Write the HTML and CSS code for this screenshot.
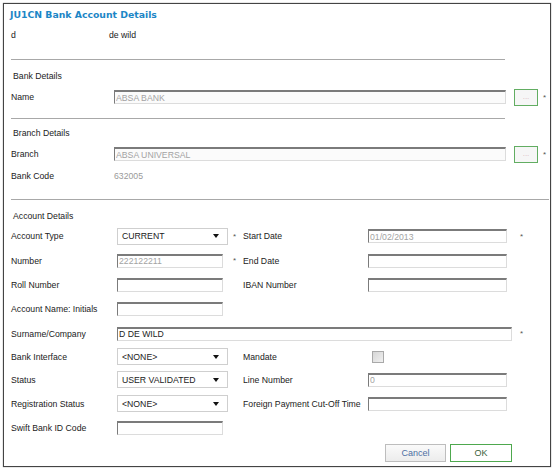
FILE: index.html
```html
<!DOCTYPE html>
<html lang="en">
<head>
    <meta charset="UTF-8">
    <title>JU1CN Bank Account Details</title>
    <link rel="stylesheet" href="styles.css">
</head>
<body>
    <div class="dialog">
        <h1 class="dialog-title">JU1CN Bank Account Details</h1>

        <div class="who">
            <span class="who-code">d</span>
            <span>de wild</span>
        </div>

        <hr class="rule rule-top">
        <div class="section-title">Bank Details</div>
        <div class="lookup-row">
            <label class="lbl">Name</label>
            <input class="field field-wide" type="text" value="ABSA BANK" disabled>
            <button class="pick">...</button>
            <span class="req">*</span>
        </div>

        <hr class="rule rule-mid">
        <div class="section-title">Branch Details</div>
        <div class="lookup-row">
            <label class="lbl">Branch</label>
            <input class="field field-wide" type="text" value="ABSA UNIVERSAL" disabled>
            <button class="pick">...</button>
            <span class="req">*</span>
        </div>
        <div class="info-row">
            <span class="lbl">Bank Code</span>
            <span class="muted">632005</span>
        </div>

        <hr class="rule rule-full">
        <div class="section-title">Account Details</div>

        <div class="account-grid">
            <label class="lbl">Account Type</label>
            <div class="select"><span>CURRENT</span><i class="caret"></i></div>
            <span class="req">*</span>
            <label class="lbl">Start Date</label>
            <input class="field" type="text" value="01/02/2013" disabled>
            <span class="req req-far">*</span>

            <label class="lbl">Number</label>
            <input class="field field-short" type="text" value="222122211" disabled>
            <span class="req">*</span>
            <label class="lbl">End Date</label>
            <input class="field" type="text">
            <span></span>

            <label class="lbl">Roll Number</label>
            <input class="field field-short" type="text">
            <span></span>
            <label class="lbl">IBAN Number</label>
            <input class="field" type="text">
            <span></span>

            <label class="lbl">Account Name: Initials</label>
            <input class="field field-short" type="text">
            <span></span><span></span><span></span><span></span>

            <label class="lbl">Surname/Company</label>
            <input class="field field-surname" type="text" value="D DE WILD">
            <span class="req req-far">*</span>

            <label class="lbl">Bank Interface</label>
            <div class="select"><span>&lt;NONE&gt;</span><i class="caret"></i></div>
            <span></span>
            <label class="lbl">Mandate</label>
            <div><span class="check"></span></div>
            <span></span>

            <label class="lbl">Status</label>
            <div class="select"><span>USER VALIDATED</span><i class="caret"></i></div>
            <span></span>
            <label class="lbl">Line Number</label>
            <input class="field" type="text" value="0" disabled>
            <span></span>

            <label class="lbl">Registration Status</label>
            <div class="select"><span>&lt;NONE&gt;</span><i class="caret"></i></div>
            <span></span>
            <label class="lbl">Foreign Payment Cut-Off Time</label>
            <input class="field" type="text">
            <span></span>

            <label class="lbl">Swift Bank ID Code</label>
            <input class="field field-short" type="text">
            <span></span><span></span><span></span><span></span>
        </div>

        <div class="actions">
            <button class="btn btn-cancel">Cancel</button>
            <button class="btn btn-ok">OK</button>
        </div>
    </div>
</body>
</html>
```

FILE: styles.css
```css
* {
    margin: 0;
    padding: 0;
    box-sizing: border-box;
}

body {
    padding: 3px;
    background: #fff;
    font-family: 'Liberation Sans', Arial, sans-serif;
    font-size: 8.7px;
    color: #222;
}

.dialog {
    width: 548px;
    height: 464px;
    border: 1px solid #444;
    box-shadow: 0 0 1px #777;
    padding-left: 7px;
}

.dialog-title {
    height: 22px;
    line-height: 22px;
    margin-left: -1px;
    font-family: 'DejaVu Sans', Verdana, sans-serif;
    font-size: 9.3px;
    font-weight: bold;
    color: #1c86c6;
}

.who {
    display: flex;
    height: 18px;
    align-items: center;
}

.who-code {
    width: 98px;
}

.rule {
    border: none;
    height: 1px;
    background: #a8a8a8;
}

.rule-top {
    width: 494px;
    margin-top: 15px;
}

.rule-mid {
    width: 494px;
    margin-top: 10px;
}

.rule-full {
    width: 538px;
    margin-top: 12px;
}

.section-title {
    height: 16px;
    line-height: 16px;
    margin-top: 8px;
    padding-left: 2px;
}

.rule-mid + .section-title {
    margin-top: 6px;
}

.lbl {
    color: #222;
}

.lookup-row {
    display: flex;
    align-items: center;
    height: 22px;
    margin-top: 2px;
}

.lookup-row .lbl,
.info-row .lbl {
    width: 103px;
}

.info-row {
    display: flex;
    align-items: center;
    height: 22px;
}

.muted {
    color: #9a9a9a;
}

.field {
    height: 14px;
    width: 139px;
    padding: 0 1px;
    font: inherit;
    color: #222;
    background: #fff;
    border: 1px solid #dcdcdc;
    border-top: 2px solid #7b7b7b;
    border-left-color: #7b7b7b;
    outline: none;
}

.field:disabled {
    color: #a3a3a3;
    background: #fff;
}

.field-wide,
.field-wide:disabled {
    width: 392px;
    background: #fbfbfb;
}

.field-short {
    width: 106px;
}

.field-surname {
    grid-column: 2 / 6;
    width: 395px;
}

.pick {
    width: 24px;
    height: 17px;
    margin-left: 8px;
    border: 1px solid #62ad62;
    background: #f6f6f6;
    color: #d8b8c0;
    font: inherit;
    font-size: 8px;
    line-height: 10px;
}

.req {
    padding-left: 5px;
    color: #555;
    font-size: 8px;
}

.req-far {
    padding-left: 13px;
}

.account-grid {
    display: grid;
    grid-template-columns: 106px 111px 15px 125px 139px 1fr;
    grid-template-rows: 24px 25px 24px 24px 25px 21px 25px 23px 25px;
    align-items: center;
}

.select {
    display: flex;
    align-items: center;
    justify-content: space-between;
    height: 17px;
    padding: 0 8px 0 4px;
    border: 1px solid #cfcfcf;
    background: #fff;
}

.caret {
    width: 0;
    height: 0;
    border-left: 3px solid transparent;
    border-right: 3px solid transparent;
    border-top: 4px solid #111;
}

.check {
    display: block;
    width: 12px;
    height: 12px;
    margin-left: 4px;
    border: 1px solid #a9a9a9;
    background: linear-gradient(135deg, #d6d6d6, #f0f0f0);
}

.actions {
    display: flex;
    gap: 4px;
    margin-top: 4px;
    padding-left: 374px;
}

.btn {
    width: 62px;
    height: 18px;
    font: inherit;
    font-size: 9px;
}

.btn-cancel {
    width: 61px;
    border: 1px solid #bdbdbd;
    background: linear-gradient(#fafafa, #ececec);
    color: #4d6fa3;
}

.btn-ok {
    border: 1px solid #4ea84e;
    background: #fff;
    color: #3b5f3b;
}
```
